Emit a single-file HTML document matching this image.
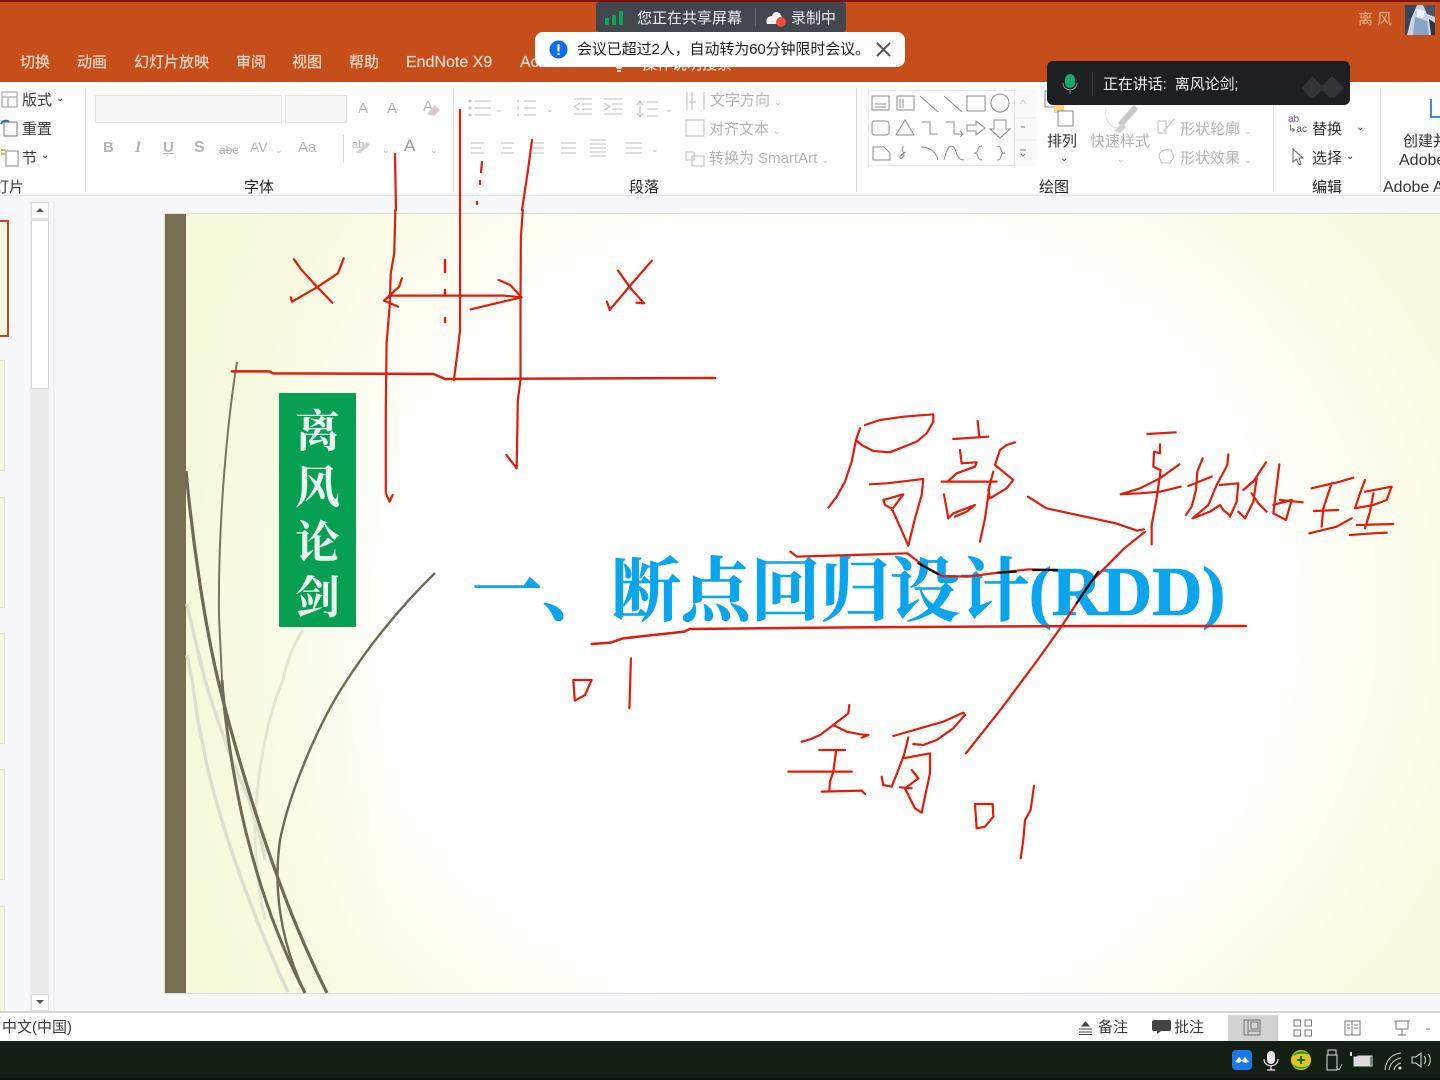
<!DOCTYPE html>
<html lang="zh"><head><meta charset="utf-8"><title>断点回归设计</title>
<style>
html,body{margin:0;padding:0;background:#fff}
#p{position:relative;width:1440px;height:1080px;overflow:hidden;background:#f7f8f9;font-family:"Liberation Sans","Noto Sans CJK SC",sans-serif;font-size:15px;color:#333}
#p div,#p span.t{position:absolute}
.t{white-space:nowrap;line-height:20px;height:20px}
.tab{color:#f6dccb;font-size:15px;top:53px;-webkit-text-stroke:.2px #f6dccb}
.dis{color:#b4b4b4}
.blk{color:#3a3a3a}
.sep{width:1px;background:#dcdcdc}
svg{position:absolute;overflow:visible}
.ink path{fill:none;stroke:#e01c0c;stroke-width:2.200;stroke-linecap:round;stroke-linejoin:round;vector-effect:non-scaling-stroke}
.ic path,.ic rect,.ic circle,.ic line{fill:none;stroke:#bdbdbd;stroke-width:1}
.th{left:0;width:5px;background:#f5f8dc;border:1px solid #e4e6d4;border-left:0;box-sizing:border-box}
.gz{width:46px;height:55px;font:bold 45px/55px 'Noto Serif CJK SC',serif;color:#e9fbef}
</style></head><body><div id="p">

<!-- title bar -->
<div style="left:0;top:0;width:1440px;height:82px;background:#c64e1b"></div>
<div style="left:0;top:0;width:1440px;height:2px;background:#7d1410"></div>
<span class="t tab" style="left:20px">切换</span>
<span class="t tab" style="left:77px">动画</span>
<span class="t tab" style="left:134px">幻灯片放映</span>
<span class="t tab" style="left:236px">审阅</span>
<span class="t tab" style="left:292px">视图</span>
<span class="t tab" style="left:349px">帮助</span>
<span class="t tab" style="left:406px;font-size:16px">EndNote X9</span>
<span class="t tab" style="left:520px;font-size:16px">Acrobat</span>
<span class="t tab" style="left:642px;top:55px">操作说明搜索</span>
<svg style="left:612px;top:58px" width="14" height="16"><rect x="4" y="2" width="6" height="9" rx="2" fill="#f6dccb"/><rect x="5" y="12" width="4" height="2" fill="#f6dccb"/></svg>
<span class="t" style="left:1358px;top:10px;color:#eeb08e;font-size:15px;letter-spacing:4px">离风</span>
<svg style="left:1405px;top:5px" width="30" height="30"><rect width="30" height="30" fill="#c9d4e2"/><path d="M0 0H12L6 14L2 30H0Z" fill="#39445c"/><path d="M18 0H30V12L22 9Z" fill="#4b5568"/><path d="M10 12L22 16L24 30H8Z" fill="#8aa4c8"/><path d="M12 4L20 6L18 13L12 12Z" fill="#eef2f6"/><path d="M24 14L30 18V30H26Z" fill="#2c3446"/></svg>

<!-- ribbon -->
<div style="left:0;top:82px;width:1440px;height:113px;background:#fff"></div>
<div style="left:0;top:195px;width:1440px;height:1px;background:#e6e6e6"></div>

<svg class="ic" style="left:0;top:90px" width="20" height="80"><rect x="2" y="2" width="15" height="15" fill="#eee" style="stroke:#999"/><path d="M2 7H17M8 7V17" style="stroke:#999"/><rect x="4" y="32" width="13" height="14" style="stroke:#777"/><path d="M1 34C3 30 7 30 9 32" style="stroke:#2a70b8;stroke-width:2"/><rect x="6" y="61" width="12" height="15" style="stroke:#888"/><path d="M1 60H6M1 64H5" style="stroke:#e5b455;stroke-width:2"/></svg>
<span class="t blk" style="left:22px;top:91px">版式</span><span class="t blk" style="left:56px;top:89px;font-size:10px">⌄</span>
<span class="t blk" style="left:22px;top:120px">重置</span>
<span class="t blk" style="left:22px;top:149px">节</span><span class="t blk" style="left:41px;top:146px;font-size:10px">⌄</span>
<span class="t blk" style="left:-6px;top:178px">灯片</span>
<div class="sep" style="left:85px;top:88px;height:104px"></div>

<div style="left:95px;top:95px;width:187px;height:28px;border:1px solid #e4e4e4;background:#f8f8f8;box-sizing:border-box"></div>
<div style="left:285px;top:95px;width:62px;height:28px;border:1px solid #e4e4e4;background:#f8f8f8;box-sizing:border-box"></div>
<span class="t dis" style="left:358px;top:99px;font-size:15px">A</span><span class="t dis" style="left:387px;top:99px;font-size:15px">A</span>
<span class="t dis" style="left:423px;top:97px;font-size:15px">A</span>
<svg style="left:425px;top:102px" width="16" height="16"><path d="M2 12L10 3L15 8L9 14Z" fill="#d8c8cc"/></svg>
<span class="t dis" style="left:103px;top:138px;font-weight:bold">B</span>
<span class="t dis" style="left:135px;top:138px;font-style:italic;font-family:'Liberation Serif',serif;font-size:16px;font-weight:bold">I</span>
<span class="t dis" style="left:163px;top:138px;font-weight:bold;text-decoration:underline">U</span>
<span class="t dis" style="left:194px;top:138px;font-weight:bold;font-size:16px">S</span>
<span class="t dis" style="left:219px;top:140px;font-size:12px;text-decoration:line-through">abc</span>
<span class="t dis" style="left:250px;top:137px;font-size:14px">AV</span>
<span class="t dis" style="left:298px;top:138px">Aa</span>
<span class="t dis" style="left:352px;top:135px;font-size:11px">ab</span>
<svg style="left:352px;top:138px" width="22" height="18"><path d="M4 15L15 4L18 7L8 15Z" fill="#d3d3d3"/></svg>
<span class="t" style="left:404px;top:136px;font-size:17px;color:#9c9c9c">A</span>
<span class="t dis" style="left:275px;top:140px;font-size:9px">⌄</span>
<span class="t dis" style="left:382px;top:140px;font-size:9px">⌄</span>
<span class="t dis" style="left:430px;top:140px;font-size:9px">⌄</span>
<div class="sep" style="left:343px;top:135px;height:28px"></div>
<span class="t blk" style="left:244px;top:178px;color:#222">字体</span>
<div class="sep" style="left:453px;top:88px;height:104px"></div>

<svg class="ic" style="left:466px;top:95px" width="220" height="70">
<path d="M9 6H25M9 13H25M9 20H25"/><circle cx="4" cy="6" r="1"/><circle cx="4" cy="13" r="1"/><circle cx="4" cy="20" r="1"/>
<path d="M58 6H70M58 13H70M58 20H70M52 4V8M52 11V15M52 18V22"/>
<path d="M108 4H126M116 9H126M116 14H126M108 19H126M114 8L108 11.5L114 15"/>
<path d="M138 4H156M146 9H156M146 14H156M138 19H156M138 8L144 11.5L138 15"/>
<path d="M174 7V21M171 10L174 6L177 10M171 18L174 22L177 18M181 7H192M181 14H192M181 21H192"/>
<path d="M5 48H18M5 53H15M5 58H18"/><path d="M35 48H48M37 53H46M35 58H48"/>
<path d="M66 48H78M66 53H78M66 58H78"/><path d="M95 48H110M95 53H110M95 58H110"/>
<path d="M124 45H140M124 49H140M124 53H140M124 57H140M124 61H140"/>
<path d="M160 48H176M160 53H176M160 58H176"/>
</svg>
<span class="t dis" style="left:495px;top:99px;font-size:9px">⌄</span>
<span class="t dis" style="left:546px;top:99px;font-size:9px">⌄</span>
<span class="t dis" style="left:665px;top:99px;font-size:9px">⌄</span>
<span class="t dis" style="left:651px;top:139px;font-size:9px">⌄</span>
<svg class="ic" style="left:684px;top:88px" width="24" height="80"><path d="M3 4V22M8 4V22M20 4V22M5 14H12"/><rect x="2" y="32" width="18" height="16"/><rect x="2" y="64" width="8" height="8"/><rect x="8" y="68" width="12" height="10"/></svg>
<span class="t dis" style="left:710px;top:91px">文字方向 <span style="font-size:9px">⌄</span></span>
<span class="t dis" style="left:709px;top:120px">对齐文本 <span style="font-size:9px">⌄</span></span>
<span class="t dis" style="left:709px;top:149px">转换为 SmartArt <span style="font-size:9px">⌄</span></span>
<span class="t blk" style="left:629px;top:178px;color:#222">段落</span>
<div class="sep" style="left:856px;top:88px;height:104px"></div>

<!-- shape gallery -->
<div style="left:868px;top:90px;width:168px;height:76px;border:1px solid #eaeaea;box-sizing:border-box"></div>
<div style="left:1014px;top:90px;width:22px;height:76px;border-left:1px solid #e6e6e6;background:#fafafa"></div>
<svg style="left:870px;top:92px" width="170" height="74" fill="none" stroke="#8b8b8b" stroke-width="1">
<rect x="2" y="4" width="17" height="14"/><path d="M5 12H16M5 15H16"/><rect x="27" y="4" width="17" height="14"/><path d="M30 7V16M33 7V16"/>
<path d="M50 4L68 20M74 4L92 20"/><rect x="97" y="4" width="18" height="15"/><circle cx="130" cy="11" r="9"/>
<rect x="2" y="29" width="17" height="14" rx="3"/><path d="M26 43L35 28L44 43Z"/><path d="M52 30H60V42H68"/><path d="M76 30H84V42H92M90 39L93 42L90 45"/><path d="M97 33H106V29L115 36L106 43V39H97Z"/><path d="M124 28H136V37H140L130 46L120 37H124Z"/>
<path d="M3 68V55H14L20 61V68Z"/><path d="M34 54C28 58 38 62 32 66C28 68 30 62 36 60"/><path d="M51 55C60 55 66 60 68 68"/><path d="M74 68C78 50 84 52 86 60C88 66 90 68 94 68"/><path d="M112 54C106 54 110 61 104 61C110 61 106 68 112 68"/><path d="M127 54C133 54 129 61 135 61C129 61 133 68 127 68"/>
<path d="M150 12L153 8L156 12" stroke="#ccc"/><path d="M151 35H155" stroke="#777"/><path d="M150 58H156M151 62L153 64L155 62" stroke="#777"/><path d="M144 26H166M144 48H166" stroke="#e6e6e6"/>
</svg>

<svg style="left:1042px;top:85px" width="40" height="50" fill="none"><rect x="3" y="6" width="16" height="16" fill="#fff" stroke="#888"/><rect x="12" y="14" width="10" height="14" fill="#fbd27a"/><rect x="16" y="26" width="15" height="15" fill="#fff" stroke="#888"/></svg>
<span class="t blk" style="left:1047px;top:132px;color:#333">排列</span><span class="t blk" style="left:1060px;top:149px;font-size:10px">⌄</span>
<svg style="left:1098px;top:105px" width="44" height="30" fill="none"><path d="M8 4C6 20 16 24 26 24" stroke="#ddd"/><path d="M22 20L38 2" stroke="#c9c9c9" stroke-width="6"/><path d="M16 26L24 18L28 22L22 28Z" fill="#cfcfcf"/></svg>
<span class="t dis" style="left:1090px;top:132px">快速样式</span><span class="t dis" style="left:1117px;top:149px;font-size:9px">⌄</span>
<svg class="ic" style="left:1156px;top:117px" width="22" height="50"><path d="M2 4H10V16H2ZM8 14L18 2" /><path d="M3 40C3 33 10 32 15 33L18 40L14 46H6Z" fill="#ddd"/></svg>
<span class="t dis" style="left:1180px;top:120px">形状轮廓 <span style="font-size:9px">⌄</span></span>
<span class="t dis" style="left:1180px;top:149px">形状效果 <span style="font-size:9px">⌄</span></span>
<span class="t blk" style="left:1039px;top:178px;color:#222">绘图</span>
<div class="sep" style="left:1273px;top:88px;height:104px"></div>

<span class="t" style="left:1288px;top:115px;font-size:10px;color:#6b4b8e;line-height:10px">ab</span>
<span class="t" style="left:1288px;top:125px;font-size:10px;color:#555;line-height:10px">↳ac</span>
<span class="t blk" style="left:1312px;top:120px;color:#333">替换</span><span class="t blk" style="left:1356px;top:118px;font-size:10px">⌄</span>
<svg style="left:1291px;top:147px" width="14" height="20" fill="none" stroke="#666"><path d="M2 2V15L5.500 12L8 18L10 17L8 11H12Z"/></svg>
<span class="t blk" style="left:1312px;top:149px;color:#333">选择</span><span class="t blk" style="left:1346px;top:147px;font-size:10px">⌄</span>
<span class="t blk" style="left:1312px;top:178px;color:#222">编辑</span>
<div class="sep" style="left:1380px;top:88px;height:104px"></div>
<svg style="left:1428px;top:97px" width="12" height="24" fill="none" stroke="#3b8fd6" stroke-width="2"><path d="M3 2V20H12"/></svg>
<span class="t blk" style="left:1403px;top:132px;color:#333">创建并</span>
<span class="t blk" style="left:1399px;top:151px;font-size:16px;color:#333">Adobe</span>
<span class="t blk" style="left:1383px;top:178px;font-size:16px;color:#333">Adobe A</span>

<!-- thumbnails -->
<div style="left:0;top:220px;width:9px;height:117px;background:#f7f9dd;border:2px solid #b8492a;border-left:0;box-sizing:border-box"></div>
<div class="th" style="top:360px;height:111px"></div>
<div class="th" style="top:497px;height:111px"></div>
<div class="th" style="top:633px;height:111px"></div>
<div class="th" style="top:769px;height:111px"></div>
<div class="th" style="top:906px;height:107px"></div>
<div style="left:30px;top:201px;width:19px;height:810px;background:#ebebeb"></div>
<div style="left:31px;top:202px;width:18px;height:17px;background:#fff;border:1px solid #ddd;box-sizing:border-box"></div>
<div style="left:31px;top:220px;width:18px;height:169px;background:#fff;border:1px solid #d6d6d6;box-sizing:border-box"></div>
<div style="left:31px;top:994px;width:18px;height:17px;background:#fff;border:1px solid #ddd;box-sizing:border-box"></div>
<svg style="left:31px;top:202px" width="18" height="810" fill="#555"><path d="M5 10L9 6L13 10Z"/><path d="M5 798L9 802L13 798Z"/></svg>
<div style="left:53px;top:201px;width:2px;height:810px;background:#ececec"></div>

<!-- slide -->
<div style="left:165px;top:214px;width:1275px;height:779px;background:#fff;overflow:hidden;box-shadow:0 0 0 1px #dedede">
  <div style="left:0;top:0;width:1275px;height:779px;background:linear-gradient(90deg,rgba(244,249,216,.7) 21px,rgba(244,249,216,0) 230px),radial-gradient(ellipse 820px 720px at 660px 400px,#fff 0%,#fff 52%,#fefef2 66%,#fbfce4 80%,#f5f9d8 100%)"></div>
  <div style="left:0;top:0;width:21px;height:779px;background:#786e50"></div>
</div>
<svg style="left:0;top:0" width="1440" height="1080" fill="none">
 <path d="M187 604C195 640 200 660 205 680C215 715 235 770 248 797C255 820 262 840 265 860" stroke="#dde0cc" stroke-width="3.500"/>
 <path d="M187 655L192 680C195 700 198 725 202 740C212 800 245 900 288 992" stroke="#dde0cc" stroke-width="3.500"/>
 <path d="M303 630C290 650 285 670 283 680C270 710 258 760 255 823C255 860 258 890 265 920" stroke="#e4e6d4" stroke-width="3"/>
 <path d="M186 471C193 545 205 625 218 680C230 730 250 800 275 870C290 912 308 955 327 993" stroke="#6f6a55" stroke-width="3.200"/>
 <path d="M222 680C226 740 240 810 248 840C262 895 280 945 305 993" stroke="#6f6a55" stroke-width="3"/>
 <path d="M237 362C226 430 218 530 219 616C220 640 221 660 222 680" stroke="#7a7560" stroke-width="2"/>
 <path d="M435 573C395 612 365 652 347 680C320 720 290 790 280 840C273 890 280 940 305 993" stroke="#6f6a55" stroke-width="2.400"/>
</svg>

<!-- green box -->
<div style="left:279px;top:393px;width:77px;height:234px;background:#079f52;border-radius:1px"></div>
<span class="t gz" style="left:295px;top:400px">离</span>
<span class="t gz" style="left:295px;top:456px">风</span>
<span class="t gz" style="left:295px;top:511px">论</span>
<span class="t gz" style="left:295px;top:566px">剑</span>

<!-- heading -->
<span class="t" style="left:472px;top:551px;height:84px;line-height:84px;font-family:'Liberation Serif','Noto Serif CJK SC',serif;font-weight:bold;font-size:70px;letter-spacing:-.4px;color:#0ba5ee;-webkit-text-stroke:.6px #0ba5ee">一、断点回归设计(RDD)</span>

<!-- ink -->
<svg class="ink" style="left:0;top:0" width="1440" height="1080">
<path d="M395 154L396 210M460 110V210M532 140L528 170L522 210M482 162L481 172M480 181V184M477 202V204"/>
<path d="M445 260V272M445 290V295M445 318V322" style="stroke-width:2.500"/>
<g transform="translate(160 210) scale(.3827 .3333)">
<path d="M615 0L612 130L603 190L600 290L592 400L590 600L590 850L600 875L608 855"/>
<path d="M784 0V360L778 420L768 510"/>
<path d="M948 0L943 80L942 260V510L935 570L932 775L905 735"/>
<path d="M188 484H285L295 490L715 492L745 507L1450 504" style="stroke-width:2.500"/>
<path d="M600 257H900L945 262M885 210L915 225L945 262L812 298M632 205L625 230L585 272L622 290"/>
<path d="M350 148L370 180L410 230L450 278M480 145L465 190L410 232L345 275L342 262"/>
<path d="M1285 152L1230 225L1175 300L1168 275M1197 182L1230 235L1265 280L1245 278"/>
</g>
<!-- 局部 -->
<g transform="translate(820 405) scale(.3333)">
<path d="M25 308L50 275L75 230L95 170L108 105L120 70"/>
<path d="M135 60L180 45L250 35L340 28L340 50L320 85L290 110L240 130L210 142L160 138L125 120L108 105"/>
<path d="M150 238L200 235L310 222L305 270L285 340L265 422L240 365L215 310L195 300L190 285L250 268L215 315"/>
<path d="M473 48L478 95M400 102L505 95M420 135L425 175L470 172L465 185L410 205L385 228M365 230H530M372 268L385 340L400 325L465 300L440 320L405 335"/>
<path d="M585 112L560 120L540 135L525 180L580 225L560 250L510 280L505 255L520 200M510 235L495 340L480 410"/>
</g>
<!-- 平均处理 -->
<g transform="translate(1110 425) scale(.3333)">
<path d="M112 27L197 22M150 58V85L132 80L130 125L150 135M208 118L150 160L90 190L32 208L90 205L150 200L212 185M152 135L140 220L125 300V358"/>
<path d="M278 100L262 140L258 195L245 245L228 270M235 183L305 155M355 88L352 120L320 180L295 240L248 280L300 260L330 240L340 255L360 272M330 180L385 175L380 230L360 275"/>
<path d="M468 112L430 170L400 195L440 160L430 230L405 280L385 260M425 205L445 235L470 260M508 118L490 265L528 285L545 225L490 240M510 225L578 232"/>
<path d="M730 158L690 170L605 190M665 175L640 250L635 305M612 258L685 255M598 325L680 305L725 280M765 165L750 205L735 250L790 240L830 225L845 185L765 200M790 205L780 260L765 310M720 330L790 325L830 323M740 300L850 297"/>
</g>
<!-- connectors and underlines -->
<g transform="translate(760 400) scale(.4337 .3333)">
<path d="M618 290L660 325L750 350L820 370L870 392L885 388M888 395L840 445L760 550L695 680L640 780L560 920L475 1060"/>
<path d="M70 455L85 470L215 465L340 460L380 500L420 528L480 530L550 518L620 508L685 510"/>
<path d="M365 490L410 522M550 518L590 515M630 510H685M780 515L730 610" style="stroke:#111"/>
</g>
<!-- 全局 01 -->
<g transform="translate(780 700) scale(.3333)">
<path d="M208 15L205 40L160 75L120 105L90 118L65 125M160 75L200 95L240 103L265 105L245 113M118 150H195M25 215H215M168 155L160 215L150 245L148 270M125 275L245 272L255 282"/>
<path d="M340 108L420 85L490 65L550 38L555 45L520 85L470 120L430 135L400 132M385 112L372 165L355 210L335 260L310 255L305 230M370 175L450 160V220L435 290L425 338L405 325L375 265L415 235L395 210M360 262L395 265"/>
<path d="M585 312H638L640 350L615 380L590 385L585 312M762 258L752 330L735 360L730 420L722 475"/>
</g>
<g transform="translate(460 540) scale(.5102 .3333)">
<path d="M258 312L295 308L320 295L440 275L450 267L770 262L1250 258L1540 258" style="stroke-width:2.500"/>
<path d="M222 420H258L245 465L225 482L222 420M335 355L332 505"/>
</g>
</svg>

<!-- share bar -->
<div style="left:596px;top:2px;width:250px;height:30px;background:#42474e;border-radius:3px"></div>
<svg style="left:604px;top:10px" width="22" height="16" fill="#12a35b"><rect x="1" y="8" width="4" height="7"/><rect x="8" y="5" width="4" height="10"/><rect x="15" y="1" width="4" height="14"/></svg>
<span class="t" style="left:637px;top:9px;color:#eef0f2">您正在共享屏幕</span>
<div style="left:755px;top:8px;width:1px;height:18px;background:#666b72"></div>
<svg style="left:765px;top:9px" width="24" height="18"><path d="M2 15C0 9 4 7 7 7C8 2 14 2 16 6L20 15Z" fill="#f2f2f2"/><circle cx="16" cy="13" r="5" fill="#e8503a"/></svg>
<span class="t" style="left:791px;top:9px;color:#eef0f2">录制中</span>

<!-- notification -->
<div style="left:535px;top:32px;width:370px;height:35px;background:#fff;border-radius:8px"></div>
<svg style="left:549px;top:40px" width="20" height="20"><circle cx="9.500" cy="9.500" r="9" fill="#0f6ef0"/><rect x="8.500" y="4" width="2" height="7.500" fill="#fff"/><rect x="8.500" y="13" width="2" height="2" fill="#fff"/></svg>
<span class="t" style="left:577px;top:40px;color:#1d1d1d;letter-spacing:-.1px">会议已超过2人，自动转为60分钟限时会议。</span>
<svg style="left:876px;top:42px" width="16" height="16" fill="none" stroke="#555" stroke-width="2"><path d="M1 1L14 14M14 1L1 14"/></svg>

<!-- speaking -->
<div style="left:1047px;top:61px;width:303px;height:44px;background:#1d2022;border-radius:6px"></div>
<svg style="left:1062px;top:74px" width="16" height="20" fill="none"><rect x="3" y="0" width="10" height="14" rx="5" fill="#17a86b"/><path d="M1 9C1 18 15 18 15 9M8 16V20" stroke="#8e9a96"/></svg>
<div style="left:1092px;top:72px;width:1px;height:24px;background:#3b3f42"></div>
<span class="t" style="left:1103px;top:75px;color:#f0f0f0;letter-spacing:-.1px">正在讲话:&nbsp; 离风论剑;</span>
<svg style="left:1300px;top:70px" width="46" height="28" fill="#333638"><path d="M2 18L12 6L22 16L32 6L44 18L34 28H30L22 20L14 28H10Z"/></svg>

<!-- status -->
<div style="left:0;top:1011px;width:1440px;height:2px;background:#d6d6d6"></div>
<div style="left:0;top:1013px;width:1440px;height:28px;background:#fff"></div>
<span class="t blk" style="left:2px;top:1018px">中文(中国)</span>
<svg style="left:1078px;top:1021px" width="16" height="14" fill="none" stroke="#444"><path d="M1 8H14M1 11H14M1 13.500H14"/><path d="M4 5L7.500 1L11 5Z" fill="#444"/></svg>
<span class="t blk" style="left:1098px;top:1018px">备注</span>
<svg style="left:1152px;top:1019px" width="20" height="16" fill="#444"><path d="M2 1H17Q19 1 19 3V10Q19 12 17 12H9L5 15V12H2Q0 12 0 10V3Q0 1 2 1Z"/></svg>
<span class="t blk" style="left:1174px;top:1018px">批注</span>
<div style="left:1228px;top:1015px;width:50px;height:26px;background:#d2d2d2"></div>
<svg style="left:1240px;top:1018px" width="190" height="20" fill="none" stroke="#777">
<rect x="4" y="2" width="16" height="15"/><path d="M8 2V17M8 13H20"/><rect x="11" y="4" width="7" height="7"/>
<rect x="54" y="2" width="6.500" height="6"/><rect x="65" y="2" width="6.500" height="6"/><rect x="54" y="12" width="6.500" height="6"/><rect x="65" y="12" width="6.500" height="6"/>
<path d="M105 3H112V17H105ZM112 3H120V17H112ZM107 7H110M107 10H110M114 7H118M114 10H118"/>
<path d="M154 3H170M156 3V11H168V3M162 11V17M158 17H166"/>
<path d="M186 11H190"/>
</svg>

<!-- taskbar -->
<div style="left:0;top:1041px;width:1440px;height:39px;background:#141f14"></div>
<div style="left:0;top:1078px;width:1440px;height:2px;background:#0c0f0c"></div>
<svg style="left:1230px;top:1048px" width="210" height="28" fill="none">
<rect x="2" y="2" width="20" height="20" rx="4" fill="#1a78e8"/><path d="M5 14L9 9L12 12L15 9L19 14L15 15L12 13L9 15Z" fill="#fff"/>
<rect x="37" y="3" width="8" height="13" rx="4" fill="#e8e8e8"/><path d="M34 11C34 20 48 20 48 11M41 18V22M37 22H45" stroke="#e8e8e8" stroke-width="1.200"/>
<circle cx="71" cy="12" r="10" fill="#e3c51c"/><path d="M62 8C66 2 76 2 80 7C74 5 68 5 62 8Z" fill="#1c9a3a"/><path d="M62 16C66 22 76 22 80 17C74 20 68 20 62 16Z" fill="#1c9a3a"/><path d="M71 8V16M67 12H75" stroke="#156b2a" stroke-width="2"/>
<rect x="97" y="7" width="10" height="15" stroke="#dcdcdc"/><rect x="98" y="2" width="8" height="5" stroke="#dcdcdc"/><path d="M106 19L109 22L112 16" stroke="#aaa"/>
<rect x="124" y="9" width="16" height="9" fill="#dcdcdc" stroke="#dcdcdc"/><rect x="128" y="8" width="14" height="10" stroke="#dcdcdc"/><path d="M121 4V8" stroke="#dcdcdc" stroke-width="2"/>
<path d="M155 22C156 12 162 6 171 5M159 22C160 15 165 11 171 10M164 22C165 18 167 16 171 15" stroke="#cfd4cf"/><circle cx="170" cy="20" r="1.500" fill="#dcdcdc"/>
<path d="M182 9H186L191 5V19L186 15H182Z" stroke="#dcdcdc"/><path d="M194 8C196 10 196 14 194 16M198 6C201 9 201 15 198 18" stroke="#dcdcdc"/>
</svg>
</div></body></html>
